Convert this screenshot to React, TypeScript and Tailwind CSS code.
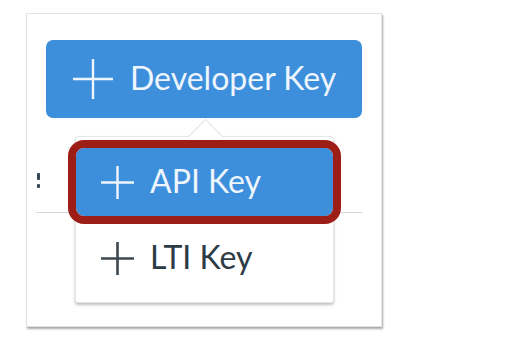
import React from "react";

function PlusIcon({ size, stroke, color }: { size: number; stroke: number; color: string }) {
  const c = size / 2;
  return (
    <svg width={size} height={size} viewBox={`0 0 ${size} ${size}`} className="shrink-0">
      <line x1={c} y1={0} x2={c} y2={size} stroke={color} strokeWidth={stroke} />
      <line x1={0} y1={c} x2={size} y2={c} stroke={color} strokeWidth={stroke} />
    </svg>
  );
}

export default function App() {
  return (
    <div className="relative h-[354px] w-[522px] overflow-hidden bg-white font-['Lato','Liberation_Sans',sans-serif]">
      <div className="relative ml-[26px] mt-[13px] h-[314px] w-[356px] border border-[#e3e3e3] bg-white shadow-[1px_2px_2px_rgba(0,0,0,0.35)]">
        {/* primary action */}
        <button
          type="button"
          className="ml-[19px] mt-[26px] flex h-[78px] w-[316px] items-center gap-[17px] rounded-[7px] bg-[#3d8fdc] pl-[27px] text-[32px] leading-none text-[#eef5fc]"
        >
          <PlusIcon size={40} stroke={2.4} color="#eef5fc" />
          <span className="pb-[2px]">Developer Key</span>
        </button>

        {/* page content behind the menu */}
        <div className="ml-[9px] h-[95px] w-[326px] border-b border-[#d4d7da]">
          <div className="flex flex-col items-start gap-[4px] pl-[1px] pt-[55px]">
            <span className="h-[7px] w-[3px] rounded-[1px] bg-[#3a464f]" />
            <span className="h-[4px] w-[3px] rounded-[1px] bg-[#3a464f]" />
          </div>
        </div>

        {/* dropdown */}
        <div className="absolute left-[48px] top-[122px] h-[167px] w-[259px] rounded-[3px] border border-[#e4e6e8] bg-white shadow-[0_2px_3px_rgba(0,0,0,0.25)]">
          <div className="absolute -top-[13px] left-[117px] h-[25px] w-[25px] rotate-45 border-l border-t border-[#e1e3e5] bg-white" />
          <div className="relative mt-[11px] flex h-[68px] items-center gap-[16px] rounded-[8px] bg-[#3d8fdc] pl-[25px] text-[32px] leading-none text-[#eef5fc]">
            <div className="absolute -inset-[8px] rounded-[16px] border-[8px] border-[#9d1d17]" />
            <PlusIcon size={33} stroke={2.4} color="#eef5fc" />
            <span className="pb-[2px]">API Key</span>
          </div>
          <div className="mt-[8px] flex h-[68px] items-center gap-[16px] pl-[25px] text-[32px] leading-none text-[#2d3b45]">
            <PlusIcon size={33} stroke={2.6} color="#3b4852" />
            <span className="pb-[2px]">LTI Key</span>
          </div>
        </div>
      </div>
    </div>
  );
}
